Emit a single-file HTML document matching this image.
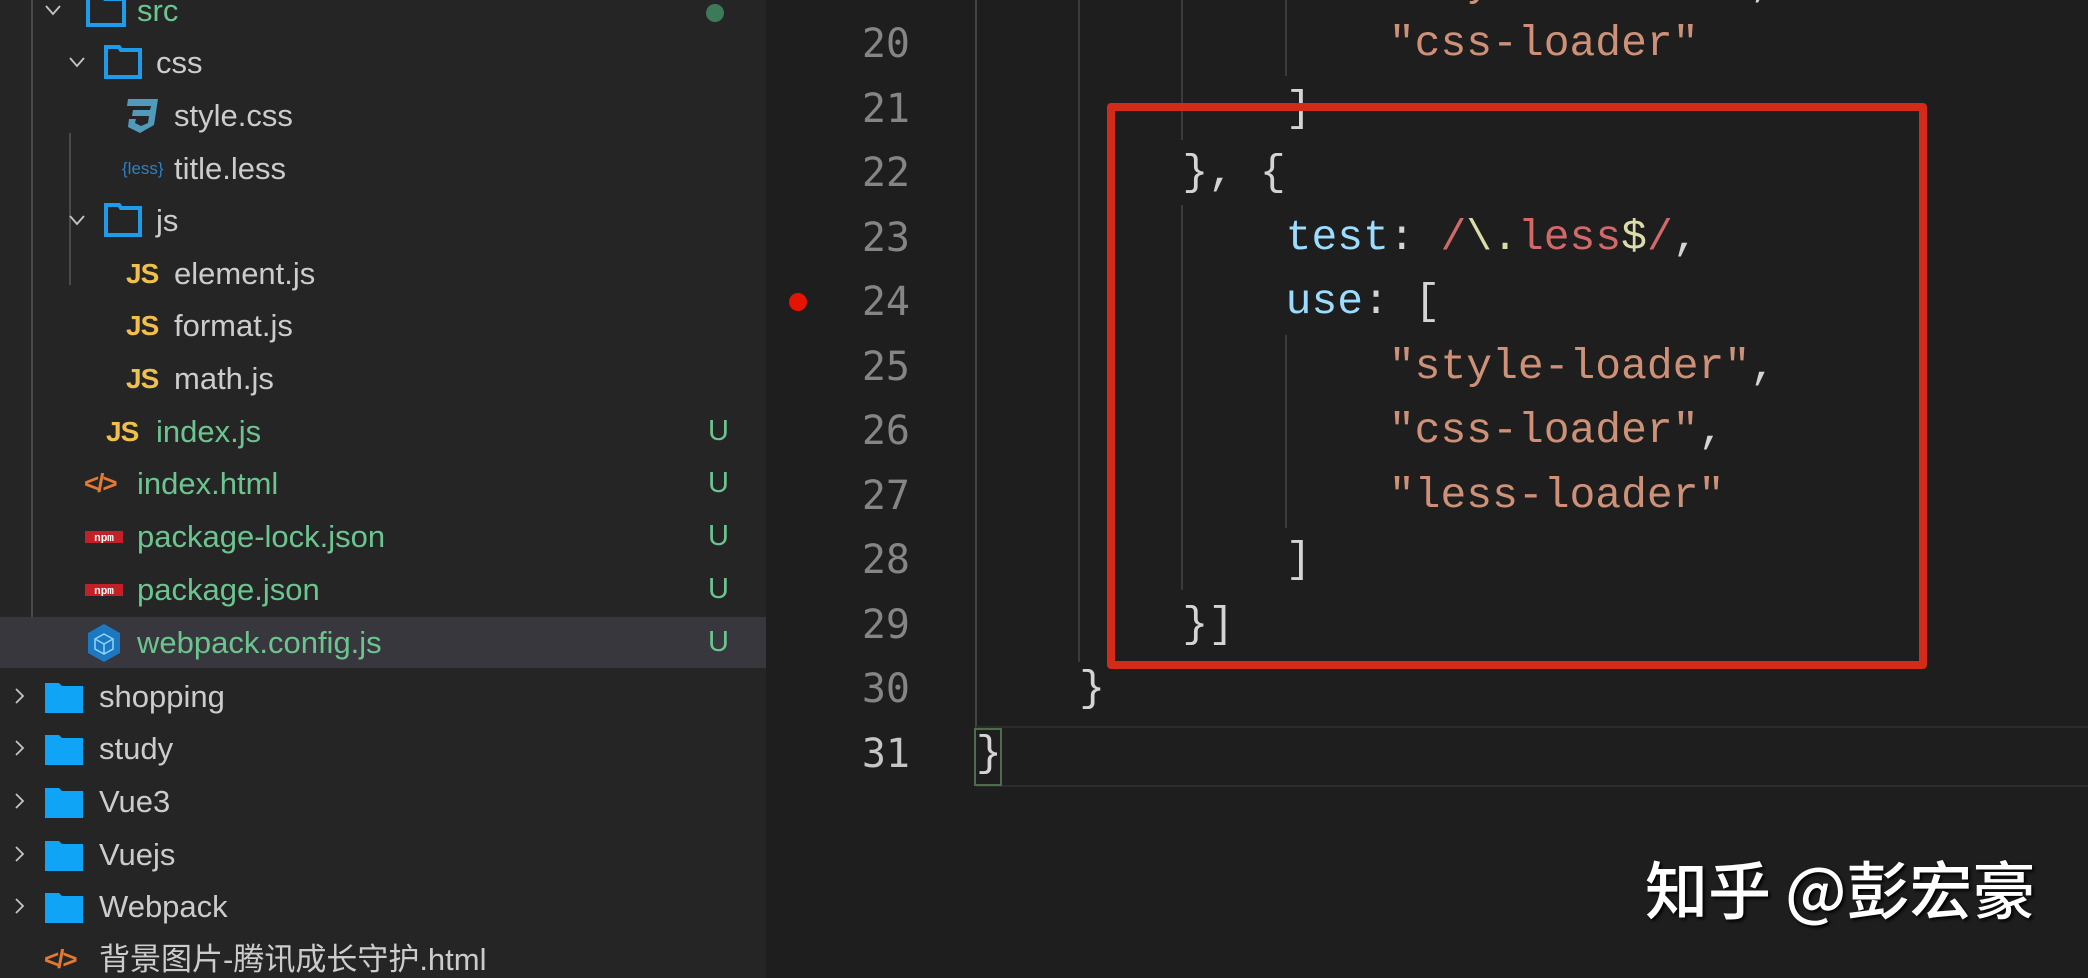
<!DOCTYPE html>
<html><head><meta charset="utf-8"><style>
*{margin:0;padding:0;box-sizing:border-box}
body{width:2088px;height:978px;overflow:hidden;background:#1e1e1e;position:relative;font-family:"Liberation Sans","Noto Sans CJK SC",sans-serif}
#side{position:absolute;left:0;top:0;width:766px;height:978px;background:#252526;overflow:hidden}
.row{position:absolute;left:0;width:766px;height:53px;line-height:53px;font-size:31px;color:#cccccc}
.row .t{position:absolute;top:0;white-space:nowrap}
.g{color:#6cc58f}
.u{position:absolute;left:708px;top:0;color:#6cc58f;font-size:29px}
.sel{background:#37373d}
.chev{position:absolute;top:17px;width:18px;height:18px}
.ic{position:absolute}
.code{position:absolute;left:976px;font-family:"Liberation Mono","DejaVu Sans Mono",monospace;font-size:43px;line-height:64.5px;height:64.5px;white-space:pre;color:#d4d4d4}
.ln{position:absolute;left:820px;width:90px;text-align:right;font-family:"DejaVu Sans Mono","Liberation Mono",monospace;font-size:40px;line-height:64.5px;color:#858585}
.s{color:#ce9178}.k{color:#9cdcfe}.r{color:#d16969}.y{color:#dcdcaa}
.guide{position:absolute;width:2px;background:#3b3b3b}
</style></head><body>
<div id="side">
<div style="position:absolute;left:31px;top:0;width:2px;height:668px;background:#4a4a4a"></div>
<div style="position:absolute;left:69px;top:133px;width:2px;height:152px;background:#4a4a4a"></div>

<div class="row" style="top:-16px">
<svg class="chev" style="left:44px" viewBox="0 0 18 18"><path d="M2 5l7 8 7-8" fill="none" stroke="#c5c5c5" stroke-width="1.8"/></svg>
<svg class="ic" style="left:85px;top:8px" width="42" height="36" viewBox="0 0 42 36"><path d="M3 3h14l3 4h19v26H3z" fill="none" stroke="#1e9be9" stroke-width="4"/></svg>
<span class="t g" style="left:137px">src</span>
<div style="position:absolute;left:706px;top:20px;width:18px;height:18px;border-radius:50%;background:#3d7a5a"></div>
</div>
<div class="row" style="top:36px">
<svg class="chev" style="left:68px" viewBox="0 0 18 18"><path d="M2 5l7 8 7-8" fill="none" stroke="#c5c5c5" stroke-width="1.8"/></svg>
<svg class="ic" style="left:103px;top:9px" width="40" height="36" viewBox="0 0 40 36"><path d="M3 5V2h13l2 3h19v27H3z" fill="none" stroke="#1e9be9" stroke-width="4"/></svg>
<span class="t" style="left:156px">css</span>
</div>
<div class="row" style="top:89px">
<svg class="ic" style="left:122px;top:8px" width="38" height="38" viewBox="0 0 38 38"><path d="M6 2h30l-4 26-14 8-12-6 1-8h7l-1 4 6 3 7-3 1-7H10l1-6h17l1-4H5z" fill="#519aba"/></svg>
<span class="t" style="left:174px">style.css</span>
</div>
<div class="row" style="top:142px">
<span class="t" style="left:122px;font-size:17px;color:#2f7fc6">{less}</span>
<span class="t" style="left:174px">title.less</span>
</div>
<div class="row" style="top:194px">
<svg class="chev" style="left:68px" viewBox="0 0 18 18"><path d="M2 5l7 8 7-8" fill="none" stroke="#c5c5c5" stroke-width="1.8"/></svg>
<svg class="ic" style="left:103px;top:9px" width="40" height="36" viewBox="0 0 40 36"><path d="M3 5V2h13l2 3h19v27H3z" fill="none" stroke="#1e9be9" stroke-width="4"/></svg>
<span class="t" style="left:156px">js</span>
</div>
<div class="row" style="top:247px"><span class="t" style="left:126px;color:#f1bf4d;font-weight:bold;font-size:28px;letter-spacing:-1px">JS</span><span class="t" style="left:174px">element.js</span></div>
<div class="row" style="top:299px"><span class="t" style="left:126px;color:#f1bf4d;font-weight:bold;font-size:28px;letter-spacing:-1px">JS</span><span class="t" style="left:174px">format.js</span></div>
<div class="row" style="top:352px"><span class="t" style="left:126px;color:#f1bf4d;font-weight:bold;font-size:28px;letter-spacing:-1px">JS</span><span class="t" style="left:174px">math.js</span></div>
<div class="row" style="top:405px"><span class="t" style="left:106px;color:#f1bf4d;font-weight:bold;font-size:28px;letter-spacing:-1px">JS</span><span class="t g" style="left:156px">index.js</span><span class="u">U</span></div>
<div class="row" style="top:457px"><span class="t" style="left:84px;color:#e37933;font-size:26px;font-weight:bold;letter-spacing:-2px">&lt;/&gt;</span><span class="t g" style="left:137px">index.html</span><span class="u">U</span></div>
<div class="row" style="top:510px">
<svg class="ic" style="left:85px;top:21px" width="38" height="12" viewBox="0 0 38 12"><rect width="38" height="12" fill="#c12127"/><text x="19" y="10" font-size="11" font-weight="bold" fill="#fff" text-anchor="middle" font-family="Liberation Mono">npm</text></svg>
<span class="t g" style="left:137px">package-lock.json</span><span class="u">U</span></div>
<div class="row" style="top:563px">
<svg class="ic" style="left:85px;top:21px" width="38" height="12" viewBox="0 0 38 12"><rect width="38" height="12" fill="#c12127"/><text x="19" y="10" font-size="11" font-weight="bold" fill="#fff" text-anchor="middle" font-family="Liberation Mono">npm</text></svg>
<span class="t g" style="left:137px">package.json</span><span class="u">U</span></div>
<div class="row sel" style="top:617px;height:51px;line-height:51px">
<svg class="ic" style="left:86px;top:6px" width="36" height="40" viewBox="0 0 36 40"><path d="M18 1l16 9v20l-16 9-16-9V10z" fill="#1c78c0"/><path d="M18 11l9 5v10l-9 5-9-5V16zM18 21v10M18 21l9-5M18 21l-9-5" fill="none" stroke="#8ed6fb" stroke-width="1.5"/></svg>
<span class="t g" style="left:137px">webpack.config.js</span><span class="u">U</span></div>
<div class="row" style="top:670px"><svg class="chev" style="left:10px" viewBox="0 0 18 18"><path d="M6 2l7 7-7 7" fill="none" stroke="#c5c5c5" stroke-width="1.8"/></svg><svg class="ic" style="left:44px;top:10px" width="40" height="34" viewBox="0 0 40 34"><path d="M1 3h14l3 3h21v27H1z" fill="#0fa4f5"/></svg><span class="t" style="left:99px">shopping</span></div>
<div class="row" style="top:722px"><svg class="chev" style="left:10px" viewBox="0 0 18 18"><path d="M6 2l7 7-7 7" fill="none" stroke="#c5c5c5" stroke-width="1.8"/></svg><svg class="ic" style="left:44px;top:10px" width="40" height="34" viewBox="0 0 40 34"><path d="M1 3h14l3 3h21v27H1z" fill="#0fa4f5"/></svg><span class="t" style="left:99px">study</span></div>
<div class="row" style="top:775px"><svg class="chev" style="left:10px" viewBox="0 0 18 18"><path d="M6 2l7 7-7 7" fill="none" stroke="#c5c5c5" stroke-width="1.8"/></svg><svg class="ic" style="left:44px;top:10px" width="40" height="34" viewBox="0 0 40 34"><path d="M1 3h14l3 3h21v27H1z" fill="#0fa4f5"/></svg><span class="t" style="left:99px">Vue3</span></div>
<div class="row" style="top:828px"><svg class="chev" style="left:10px" viewBox="0 0 18 18"><path d="M6 2l7 7-7 7" fill="none" stroke="#c5c5c5" stroke-width="1.8"/></svg><svg class="ic" style="left:44px;top:10px" width="40" height="34" viewBox="0 0 40 34"><path d="M1 3h14l3 3h21v27H1z" fill="#0fa4f5"/></svg><span class="t" style="left:99px">Vuejs</span></div>
<div class="row" style="top:880px"><svg class="chev" style="left:10px" viewBox="0 0 18 18"><path d="M6 2l7 7-7 7" fill="none" stroke="#c5c5c5" stroke-width="1.8"/></svg><svg class="ic" style="left:44px;top:10px" width="40" height="34" viewBox="0 0 40 34"><path d="M1 3h14l3 3h21v27H1z" fill="#0fa4f5"/></svg><span class="t" style="left:99px">Webpack</span></div>
<div class="row" style="top:933px"><span class="t" style="left:44px;color:#e37933;font-size:26px;font-weight:bold;letter-spacing:-2px">&lt;/&gt;</span><span class="t" style="left:99px">背景图片-腾讯成长守护.html</span></div>
</div>

<div class="guide" style="left:975px;top:0;height:785px;background:#444"></div>
<div class="guide" style="left:1078px;top:0;height:662px"></div>
<div class="guide" style="left:1181px;top:0;height:140px"></div>
<div class="guide" style="left:1181px;top:205px;height:385px"></div>
<div class="guide" style="left:1285px;top:0;height:76px"></div>
<div class="guide" style="left:1285px;top:335px;height:193px"></div>
<div style="position:absolute;left:976px;top:726px;width:1112px;height:61px;border-top:2px solid #2c2c2c;border-bottom:2px solid #2c2c2c"></div>
<div style="position:absolute;left:974px;top:728px;width:28px;height:58px;border:2px solid #4d6b4d;background:#1e1e1e"></div>

<div class="ln" style="top:12px">20</div>
<div class="ln" style="top:76.5px">21</div>
<div class="ln" style="top:141px">22</div>
<div class="ln" style="top:205.5px">23</div>
<div class="ln" style="top:270px">24</div>
<div class="ln" style="top:334.5px">25</div>
<div class="ln" style="top:399px">26</div>
<div class="ln" style="top:463.5px">27</div>
<div class="ln" style="top:528px">28</div>
<div class="ln" style="top:592.5px">29</div>
<div class="ln" style="top:657px">30</div>
<div class="ln" style="top:721.5px;color:#c6c6c6">31</div>
<div style="position:absolute;left:789px;top:293px;width:18px;height:18px;border-radius:50%;background:#e51400"></div>

<div class="code" style="top:-48px">                <span class="s">"style-loader"</span>,</div>
<div class="code" style="top:12px">                <span class="s">"css-loader"</span></div>
<div class="code" style="top:76.5px">            ]</div>
<div class="code" style="top:141px">        }, {</div>
<div class="code" style="top:205.5px">            <span class="k">test</span>: <span class="r">/</span><span class="y">\.</span><span class="r">less</span><span class="y">$</span><span class="r">/</span>,</div>
<div class="code" style="top:270px">            <span class="k">use</span>: [</div>
<div class="code" style="top:334.5px">                <span class="s">"style-loader"</span>,</div>
<div class="code" style="top:399px">                <span class="s">"css-loader"</span>,</div>
<div class="code" style="top:463.5px">                <span class="s">"less-loader"</span></div>
<div class="code" style="top:528px">            ]</div>
<div class="code" style="top:592.5px">        }]</div>
<div class="code" style="top:657px">    }</div>
<div class="code" style="top:721.5px">}</div>

<div style="position:absolute;left:1107px;top:103px;width:820px;height:566px;border:8px solid #d42a1a;border-radius:4px"></div>

<div style="position:absolute;left:1645px;top:848px;font-size:63px;line-height:80px;color:#fff;font-weight:500;font-family:'Noto Sans CJK SC',sans-serif;white-space:nowrap;text-shadow:2px 2px 3px #000">知乎 @彭宏豪</div>
</body></html>
